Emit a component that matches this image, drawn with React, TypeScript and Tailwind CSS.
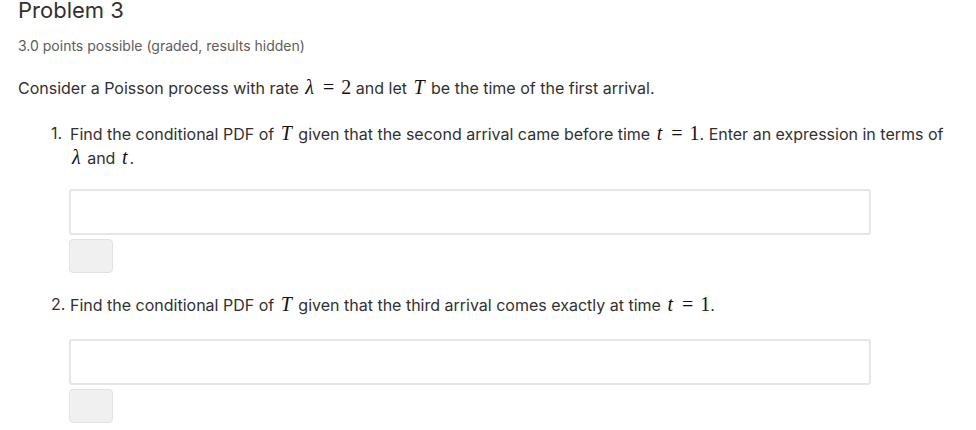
import React from "react";

const serif = { fontFamily: '"Liberation Serif", "DejaVu Serif", serif' };

const M = ({ children }: { children: React.ReactNode }) => (
  <span className="px-[2px] text-[20px] italic text-[#111]" style={serif}>
    {children}
  </span>
);
const Eq = ({ v }: { v: string }) => (
  <span className="text-[20px] text-[#111]" style={serif}>
    <span className="mx-[7px]">=</span>
    {v}
  </span>
);

const Answer = () => (
  <div className="flex flex-col gap-[4px] pl-[69px]">
    <div className="h-[46px] w-[802px] rounded-[3px] border-2 border-[#e6e6e6] bg-white" />
    <div className="h-[34px] w-[44px] rounded-[4px] border border-[#e2e2e2] bg-[#f0f0f0]" />
  </div>
);

export default function App() {
  return (
    <div className="h-[430px] w-[976px] overflow-hidden bg-white text-[#313131]" style={{ fontFamily: 'Inter, "Noto Sans", sans-serif' }}>
      <div className="pl-[18px]">
        <h2 className="mt-[-3px] text-[22px] leading-[26px] text-[#313131]">Problem 3</h2>
        <div className="mt-[14px] text-[14px] leading-[18px] text-[#5d5d5d]">3.0 points possible (graded, results hidden)</div>
        <p className="mt-[20px] text-[16px] leading-[24px]">
          Consider a Poisson process with rate <M>λ</M><Eq v="2" /> and let <M>T</M>&nbsp;be the time of the first arrival.
        </p>
      </div>
      <div className="mt-[22px] flex w-[955px] pl-[51px] text-[16px] leading-[23px]">
        <span className="w-[19px] shrink-0">1.</span>
        <span>
          Find the conditional PDF of <M>T</M>&nbsp;given that the second arrival came before time <M>t</M><Eq v="1" />. Enter an expression in terms of <M>λ</M> and <M>t</M>.
        </span>
      </div>
      <div className="mt-[19px]">
        <Answer />
      </div>
      <div className="mt-[20px] flex pl-[51px] text-[16px] leading-[23px]">
        <span className="w-[19px] shrink-0">2.</span>
        <span>
          Find the conditional PDF of <M>T</M>&nbsp;given that the third arrival comes exactly at time <M>t</M><Eq v="1" />.
        </span>
      </div>
      <div className="mt-[22px]">
        <Answer />
      </div>
    </div>
  );
}
